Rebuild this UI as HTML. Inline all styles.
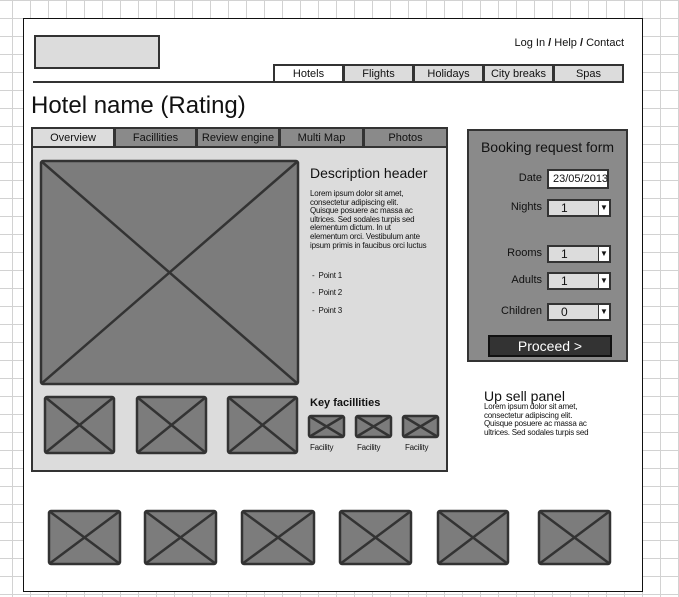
<!DOCTYPE html>
<html><head><style>
*{margin:0;padding:0;box-sizing:border-box}
body{width:679px;height:597px;position:relative;overflow:hidden;font-family:"Liberation Sans",sans-serif;color:#111;
background-color:#fff;background-image:linear-gradient(to right,#d2d2d2 1px,transparent 1px),linear-gradient(to bottom,#d2d2d2 1px,transparent 1px);background-size:18px 18px;background-position:12px 0}
.a{position:absolute}
.frame{left:23px;top:18px;width:620px;height:574px;background:#fff;border:1.5px solid #111}
.tab{position:absolute;top:64px;height:19px;background:#dcdcdc;border:2px solid #333;font-size:11px;text-align:center;line-height:16px}
.pt{position:absolute;top:127px;height:21px;background:#8a8a8a;border:2px solid #333;font-size:11px;text-align:center;line-height:18px}
.sm{font-size:8px;line-height:8.6px;letter-spacing:-0.2px}
.lbl{position:absolute;font-size:11px;text-align:right;width:60px}
.sel{position:absolute;left:547px;width:64px;height:18px;background:#dcdcdc;border:2px solid #333;font-size:12px;line-height:14px;padding-left:12px}
.sel:after{content:"▼";position:absolute;right:0;top:0;width:10px;height:14px;background:#fff;border-left:1.5px solid #333;font-size:8px;line-height:14px;text-align:center;color:#111}
svg{position:absolute}
</style></head><body>
<div class="a frame"></div>
<div class="a" style="left:34px;top:35px;width:126px;height:34px;background:#dcdcdc;border:2px solid #333"></div>
<div class="a" style="left:33px;top:81px;width:591px;height:2px;background:#333"></div>
<div class="tab" style="left:273px;width:71px;background:#fff">Hotels</div>
<div class="tab" style="left:343px;width:71px">Flights</div>
<div class="tab" style="left:413px;width:71px">Holidays</div>
<div class="tab" style="left:483px;width:71px">City breaks</div>
<div class="tab" style="left:553px;width:71px">Spas</div>
<div class="a" style="left:500px;top:37px;width:124px;text-align:right;font-size:11px">Log In <b>/</b> Help <b>/</b> Contact</div>
<div class="a" style="left:31px;top:92px;font-size:24px">Hotel name (Rating)</div>

<div class="a" style="left:31px;top:146px;width:417px;height:326px;background:#dcdcdc;border:2px solid #333"></div>
<div class="pt" style="left:31px;width:84px;background:#dcdcdc">Overview</div>
<div class="pt" style="left:114px;width:83px">Facillities</div>
<div class="pt" style="left:196px;width:84px">Review engine</div>
<div class="pt" style="left:279px;width:85px">Multi Map</div>
<div class="pt" style="left:363px;width:85px">Photos</div>

<svg width="679" height="597" style="left:0;top:0">
<g fill="#7c7c7c" stroke="#333" stroke-width="2.5">
<rect x="41" y="161" width="257" height="223" rx="2"/><path d="M41 161L298 384M298 161L41 384"/>
<rect x="45" y="397" width="69" height="56" rx="2"/><path d="M45 397L114 453M114 397L45 453"/>
<rect x="137" y="397" width="69" height="56" rx="2"/><path d="M137 397L206 453M206 397L137 453"/>
<rect x="228" y="397" width="69" height="56" rx="2"/><path d="M228 397L297 453M297 397L228 453"/>
<rect x="309" y="416" width="35" height="21" rx="2"/><path d="M309 416L344 437M344 416L309 437"/>
<rect x="356" y="416" width="35" height="21" rx="2"/><path d="M356 416L391 437M391 416L356 437"/>
<rect x="403" y="416" width="35" height="21" rx="2"/><path d="M403 416L438 437M438 416L403 437"/>
<rect x="49" y="511" width="71" height="53" rx="2"/><path d="M49 511L120 564M120 511L49 564"/>
<rect x="145" y="511" width="71" height="53" rx="2"/><path d="M145 511L216 564M216 511L145 564"/>
<rect x="242" y="511" width="72" height="53" rx="2"/><path d="M242 511L314 564M314 511L242 564"/>
<rect x="340" y="511" width="71" height="53" rx="2"/><path d="M340 511L411 564M411 511L340 564"/>
<rect x="438" y="511" width="70" height="53" rx="2"/><path d="M438 511L508 564M508 511L438 564"/>
<rect x="539" y="511" width="71" height="53" rx="2"/><path d="M539 511L610 564M610 511L539 564"/>
</g></svg>

<div class="a" style="left:310px;top:165px;font-size:14px">Description header</div>
<div class="a sm" style="left:310px;top:190px;width:135px">Lorem ipsum dolor sit amet,<br>consectetur adipiscing elit.<br>Quisque posuere ac massa ac<br>ultrices. Sed sodales turpis sed<br>elementum dictum. In ut<br>elementum orci. Vestibulum ante<br>ipsum primis in faucibus orci luctus</div>
<div class="a sm" style="left:312px;top:272px">-&nbsp; Point 1</div>
<div class="a sm" style="left:312px;top:289px">-&nbsp; Point 2</div>
<div class="a sm" style="left:312px;top:307px">-&nbsp; Point 3</div>
<div class="a" style="left:310px;top:397px;font-size:11px;font-weight:bold">Key facillities</div>
<div class="a sm" style="left:310px;top:444px">Facility</div>
<div class="a sm" style="left:357px;top:444px">Facility</div>
<div class="a sm" style="left:405px;top:444px">Facility</div>

<div class="a" style="left:467px;top:129px;width:161px;height:233px;background:#8a8a8a;border:2px solid #333"></div>
<div class="a" style="left:467px;top:139px;width:161px;text-align:center;font-size:14px">Booking request form</div>
<div class="lbl" style="left:482px;top:172px">Date</div>
<div class="a" style="left:547px;top:169px;width:62px;height:20px;background:#fff;border:2px solid #333;font-size:11px;line-height:16px;padding-left:4px">23/05/2013</div>
<div class="lbl" style="left:482px;top:201px">Nights</div><div class="sel" style="top:199px">1</div>
<div class="lbl" style="left:482px;top:247px">Rooms</div><div class="sel" style="top:245px">1</div>
<div class="lbl" style="left:482px;top:274px">Adults</div><div class="sel" style="top:272px">1</div>
<div class="lbl" style="left:482px;top:305px">Children</div><div class="sel" style="top:303px">0</div>
<div class="a" style="left:488px;top:335px;width:124px;height:22px;background:#333;border:2px solid #111;color:#fff;font-size:14px;text-align:center;line-height:18px">Proceed &gt;</div>

<div class="a" style="left:484px;top:388px;font-size:14px">Up sell panel</div>
<div class="a sm" style="left:484px;top:403px">Lorem ipsum dolor sit amet,<br>consectetur adipiscing elit.<br>Quisque posuere ac massa ac<br>ultrices. Sed sodales turpis sed</div>
</body></html>
